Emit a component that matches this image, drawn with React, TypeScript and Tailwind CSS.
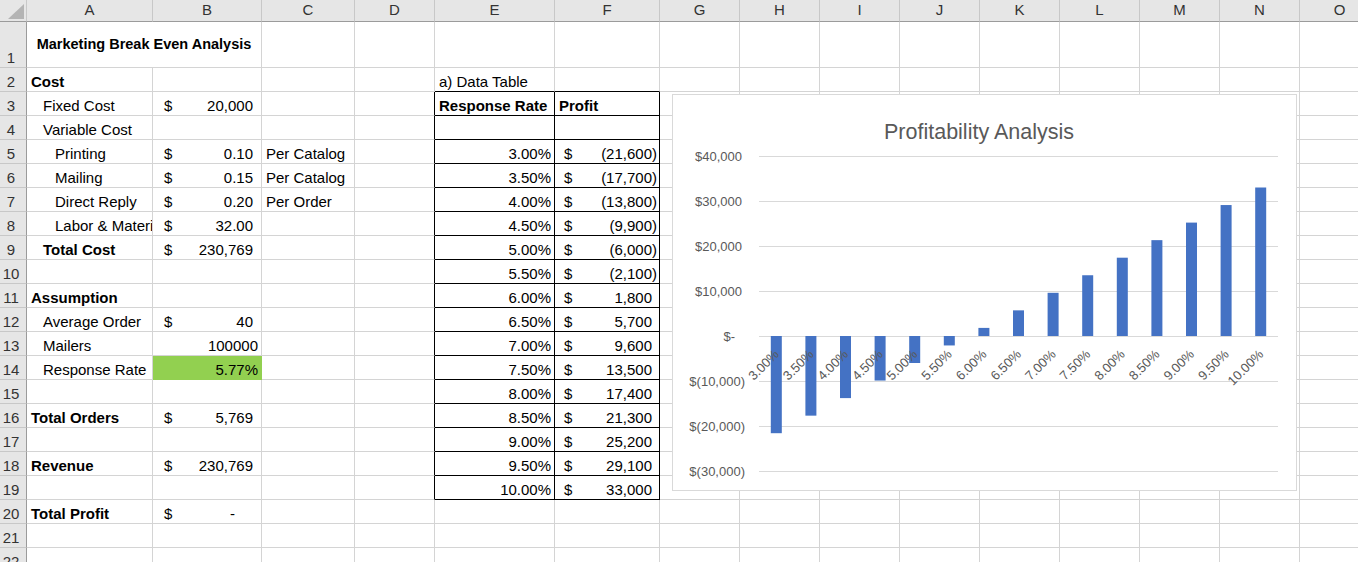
import * as React from "react";

const COLS = ["A", "B", "C", "D", "E", "F", "G", "H", "I", "J", "K", "L", "M", "N", "O"];
const ROW_COUNT = 22;

const RATES = ["3.00%", "3.50%", "4.00%", "4.50%", "5.00%", "5.50%", "6.00%", "6.50%", "7.00%", "7.50%", "8.00%", "8.50%", "9.00%", "9.50%", "10.00%"];
const PROFITS = [-21600, -17700, -13800, -9900, -6000, -2100, 1800, 5700, 9600, 13500, 17400, 21300, 25200, 29100, 33000];

const indentMap: Record<number, string> = { 0: "pl-[4px]", 1: "pl-[16px]", 2: "pl-[28px]" };

const Label = ({ children, indent = 0, bold = false }: { children: React.ReactNode; indent?: number; bold?: boolean }) => (
  <span className={`${indentMap[indent]} ${bold ? "font-bold" : ""}`}>{children}</span>
);

// accounting format in column B: "$" left, value right
const AcctB = ({ v }: { v: string }) => (
  <div className="flex w-full justify-between pl-[11px] pr-[8px]">
    <span>$</span>
    <span>{v}</span>
  </div>
);

const AcctF = ({ n }: { n: number }) => {
  const txt = Math.abs(n).toLocaleString("en-US");
  return (
    <div className={`flex w-full justify-between pl-[9px] ${n < 0 ? "pr-[2px]" : "pr-[7px]"}`}>
      <span>$</span>
      <span>{n < 0 ? `(${txt})` : txt}</span>
    </div>
  );
};

const Right = ({ children, pad = "pr-[3px]" }: { children: React.ReactNode; pad?: string }) => (
  <div className={`w-full text-right ${pad}`}>{children}</div>
);

const sheet: Record<number, Partial<Record<string, React.ReactNode>>> = {
  2: { A: <Label bold>Cost</Label>, E: <Label>a) Data Table</Label> },
  3: {
    A: <Label indent={1}>Fixed Cost</Label>,
    B: <AcctB v="20,000" />,
    E: <Label bold>Response Rate</Label>,
    F: <Label bold>Profit</Label>,
  },
  4: { A: <Label indent={1}>Variable Cost</Label> },
  5: { A: <Label indent={2}>Printing</Label>, B: <AcctB v="0.10" />, C: <Label>Per Catalog</Label> },
  6: { A: <Label indent={2}>Mailing</Label>, B: <AcctB v="0.15" />, C: <Label>Per Catalog</Label> },
  7: { A: <Label indent={2}>Direct Reply</Label>, B: <AcctB v="0.20" />, C: <Label>Per Order</Label> },
  8: { A: <Label indent={2}>Labor &amp; Materials</Label>, B: <AcctB v="32.00" /> },
  9: { A: <Label indent={1} bold>Total Cost</Label>, B: <AcctB v="230,769" /> },
  11: { A: <Label bold>Assumption</Label> },
  12: { A: <Label indent={1}>Average Order</Label>, B: <AcctB v="40" /> },
  13: { A: <Label indent={1}>Mailers</Label>, B: <Right>100000</Right> },
  14: { A: <Label indent={1}>Response Rate</Label>, B: <Right>5.77%</Right> },
  16: { A: <Label bold>Total Orders</Label>, B: <AcctB v="5,769" /> },
  18: { A: <Label bold>Revenue</Label>, B: <AcctB v="230,769" /> },
  20: {
    A: <Label bold>Total Profit</Label>,
    B: (
      <div className="flex w-full justify-between pl-[11px] pr-[26px]">
        <span>$</span>
        <span>-</span>
      </div>
    ),
  },
};

RATES.forEach((rate, i) => {
  const r = 5 + i;
  sheet[r] = { ...(sheet[r] || {}), E: <Right>{rate}</Right>, F: <AcctF n={PROFITS[i]} /> };
});

const borderFor = (r: number, c: number) => {
  const inTable = (c === 5 || c === 6) && r >= 3 && r <= 19;
  const leftOfTable = c === 4 && r >= 3 && r <= 19;
  const aboveTable = (c === 5 || c === 6) && r === 2;
  if (c === 2 && r === 14) return "border-r border-b border-[#92d050] bg-[#92d050]";
  if (inTable) return "border-r border-b border-black";
  if (leftOfTable) return "border-r border-b border-r-black border-b-[#d4d4d4]";
  if (aboveTable) return "border-r border-b border-r-[#d4d4d4] border-b-black";
  return "border-r border-b border-[#d4d4d4]";
};

const ProfitChart = () => {
  const zeroY = 241;
  const k = 0.0045;
  const x0 = 86;
  const x1 = 605;
  const step = (x1 - x0) / PROFITS.length;
  const ticks = [40000, 30000, 20000, 10000, 0, -10000, -20000, -30000];

  const tickLabel = (v: number) => {
    if (v === 0) return { text: "$-", x: 62 };
    if (v < 0) return { text: `$(${Math.abs(v).toLocaleString("en-US")})`, x: 72 };
    return { text: `$${v.toLocaleString("en-US")}`, x: 69 };
  };

  return (
    <div className="absolute left-[672px] top-[94px] h-[397px] w-[625px] border border-[#d9d9d9] bg-white">
      <svg width="623" height="395" viewBox="0 0 623 395" className="block">
        <text x="306" y="44" textAnchor="middle" fontSize="21.5" fill="#595959">
          Profitability Analysis
        </text>
        {ticks.map((v) => {
          const y = zeroY - v * k;
          const lbl = tickLabel(v);
          return (
            <g key={v}>
              <line x1={x0} x2={x1} y1={y + 0.5} y2={y + 0.5} stroke="#d9d9d9" strokeWidth="1" />
              <text x={lbl.x} y={y + 4.5} textAnchor="end" fontSize="13" fill="#595959">
                {lbl.text}
              </text>
            </g>
          );
        })}
        {PROFITS.map((p, i) => {
          const cx = x0 + step * (i + 0.5);
          const h = Math.abs(p) * k;
          const y = p < 0 ? zeroY : zeroY - h;
          return <rect key={i} x={cx - 5.5} y={y} width="11" height={h} fill="#4472c4" />;
        })}
        {RATES.map((rate, i) => {
          const cx = x0 + step * (i + 0.5) + 3.5;
          const ly = 260;
          return (
            <text
              key={rate}
              x={cx}
              y={ly}
              textAnchor="end"
              fontSize="13"
              fill="#595959"
              transform={`rotate(-45 ${cx} ${ly})`}
            >
              {rate}
            </text>
          );
        })}
      </svg>
    </div>
  );
};

export default function App() {
  const rows = Array.from({ length: ROW_COUNT }, (_, i) => i + 1);

  return (
    <div className="relative h-[562px] w-[1358px] overflow-hidden bg-white font-['Liberation_Sans',Arial,sans-serif] text-[15px] text-black">
      <div className="grid grid-cols-[27px_126px_109px_93px_80px_120px_105px_repeat(8,80px)_80px] grid-rows-[22px_46px_repeat(21,24px)]">
        {/* corner */}
        <div className="relative border-r border-b border-r-[#c8c8c8] border-b-[#9b9b9b] bg-[#e6e6e6]">
          <svg width="26" height="21" className="absolute left-0 top-0">
            <polygon points="8,19 24,19 24,4" fill="#b4b4b4" />
          </svg>
        </div>
        {COLS.map((col) => (
          <div
            key={col}
            className="flex items-center justify-center border-r border-b border-r-[#c8c8c8] border-b-[#9b9b9b] bg-[#e6e6e6] text-[#333]"
          >
            {col}
          </div>
        ))}

        {rows.map((r) => (
          <React.Fragment key={r}>
            <div className="flex items-end justify-center border-r border-b border-r-[#9b9b9b] border-b-[#c8c8c8] bg-[#e6e6e6] pr-[4px] leading-[18px] text-[#333]">
              {r}
            </div>
            {r === 1 ? (
              <>
                <div className="col-span-2 flex items-center justify-center border-r border-b border-[#d4d4d4] text-[14.5px] font-bold">
                  Marketing Break Even Analysis
                </div>
                {COLS.slice(2).map((col, j) => (
                  <div key={col} className={borderFor(r, j + 3)} />
                ))}
              </>
            ) : (
              COLS.map((col, j) => (
                <div
                  key={col}
                  className={`flex items-end overflow-hidden whitespace-nowrap leading-[18px] ${borderFor(r, j + 1)}`}
                >
                  {sheet[r]?.[col]}
                </div>
              ))
            )}
          </React.Fragment>
        ))}
      </div>

      <ProfitChart />
    </div>
  );
}
